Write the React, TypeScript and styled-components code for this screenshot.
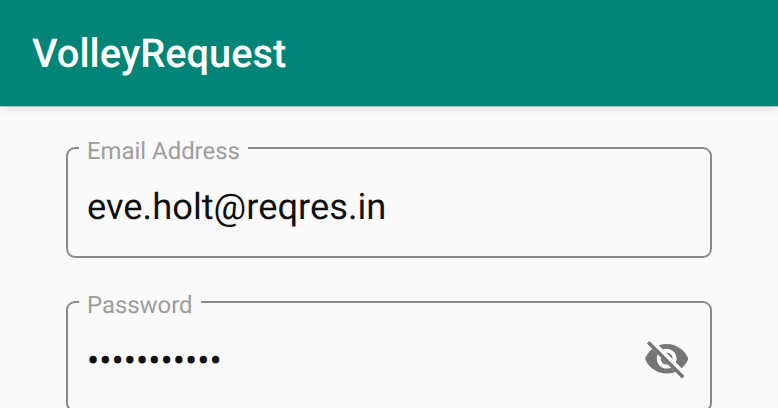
import React from "react";
import styled, { createGlobalStyle } from "styled-components";

const GlobalStyle = createGlobalStyle`
  * { box-sizing: border-box; }
  body { margin: 0; background: #fafafa; overflow: hidden; }
`;

const Screen = styled.div`
  height: 408px;
  overflow: hidden;
  background: #fafafa;
  font-family: Roboto, sans-serif;
  text-rendering: geometricPrecision;
`;

const AppBar = styled.header`
  height: 106px;
  padding: 1px 32px 0;
  display: flex;
  align-items: center;
  background: #028576;
  box-shadow: 0 1px 0 #b4bfbd, 0 2px 10px rgba(0, 0, 0, 0.12);
`;

const Title = styled.h1`
  margin: 0;
  font-size: 39.8px;
  line-height: 48px;
  font-weight: 500;
  color: #fff;
`;

const Form = styled.form`
  display: flex;
  flex-direction: column;
  gap: 30px;
  padding: 28px 66px 0;
`;

const Field = styled.fieldset`
  height: 124px;
  min-width: 0;
  margin: 0;
  padding: 0 19.5px 0 11px;
  border: 2px solid #8b8b8b;
  border-radius: 9px;
`;

const Label = styled.legend`
  height: 28px;
  padding: 3px 8px 0;
  font-size: 23.9px;
  line-height: 28px;
  color: #9d9d9d;
`;

const InputRow = styled.div<{ $height: number }>`
  display: flex;
  align-items: center;
  justify-content: space-between;
  height: ${(p) => p.$height}px;
`;

const Value = styled.span`
  padding-left: 8px;
  font-size: 36.3px;
  line-height: 42px;
  color: #101010;
`;

const MaskedValue = styled(Value)`
  padding-top: 5px;
`;

const Eye = styled.svg`
  width: 47.4px;
  height: 47.4px;
  flex: none;
`;

const HiddenIcon = () => (
  <Eye viewBox="0 0 24 24" fill="#757575">
    <clipPath id="strike">
      <path d="M2,4.27L19.73,22L22.27,19.46L4.54,1.73L4.54,1L23,1L23,23L1,23L1,4.27Z" />
    </clipPath>
    <path
      clipPath="url(#strike)"
      d="M12,4.5C7,4.5 2.73,7.61 1,12c1.73,4.39 6,7.5 11,7.5s9.27,-3.11 11,-7.5c-1.73,-4.39 -6,-7.5 -11,-7.5zM12,17c-2.76,0 -5,-2.24 -5,-5s2.24,-5 5,-5 5,2.24 5,5 -2.24,5 -5,5zM12,9c-1.66,0 -3,1.34 -3,3s1.34,3 3,3 3,-1.34 3,-3 -1.34,-3 -3,-3z"
    />
    <path d="M2,4.27L19.73,22L21,20.73L3.27,3Z" />
  </Eye>
);

export default function App() {
  return (
    <Screen>
      <GlobalStyle />
      <AppBar>
        <Title>VolleyRequest</Title>
      </AppBar>
      <Form>
        <Field>
          <Label>Email Address</Label>
          <InputRow $height={90}>
            <Value>eve.holt@reqres.in</Value>
          </InputRow>
        </Field>
        <Field>
          <Label>Password</Label>
          <InputRow $height={85}>
            <MaskedValue>•••••••••••</MaskedValue>
            <HiddenIcon />
          </InputRow>
        </Field>
      </Form>
    </Screen>
  );
}
